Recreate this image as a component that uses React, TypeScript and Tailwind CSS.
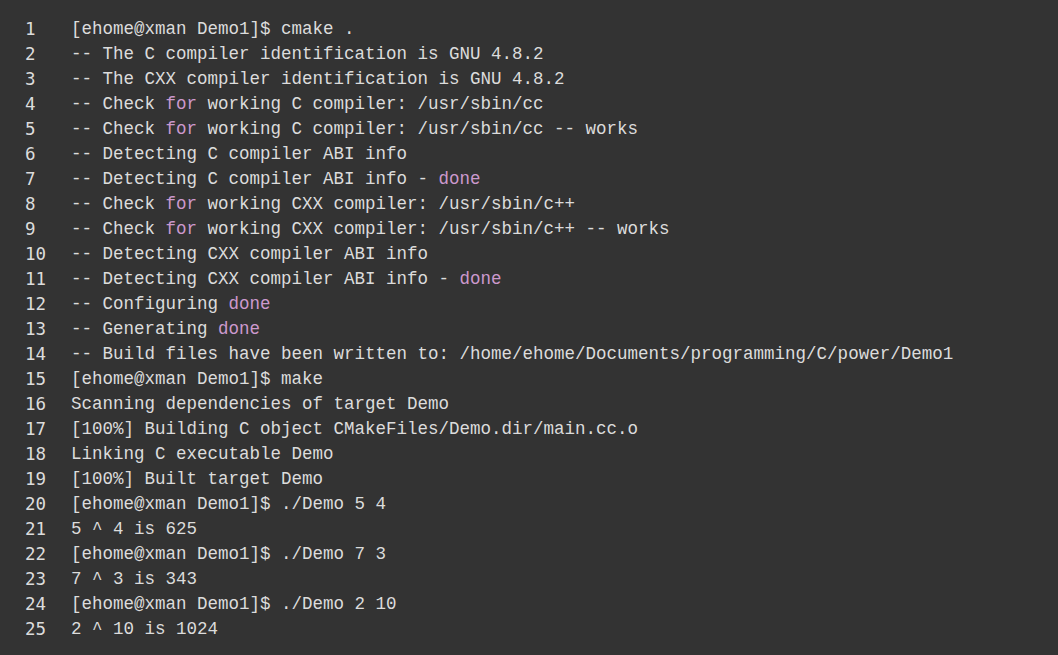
import React from 'react';

type Part = { t: string; k?: boolean };

const lines: Part[][] = [
  [{ t: '[ehome@xman Demo1]$ cmake .' }],
  [{ t: '-- The C compiler identification is GNU 4.8.2' }],
  [{ t: '-- The CXX compiler identification is GNU 4.8.2' }],
  [{ t: '-- Check ' }, { t: 'for', k: true }, { t: ' working C compiler: /usr/sbin/cc' }],
  [{ t: '-- Check ' }, { t: 'for', k: true }, { t: ' working C compiler: /usr/sbin/cc -- works' }],
  [{ t: '-- Detecting C compiler ABI info' }],
  [{ t: '-- Detecting C compiler ABI info - ' }, { t: 'done', k: true }],
  [{ t: '-- Check ' }, { t: 'for', k: true }, { t: ' working CXX compiler: /usr/sbin/c++' }],
  [{ t: '-- Check ' }, { t: 'for', k: true }, { t: ' working CXX compiler: /usr/sbin/c++ -- works' }],
  [{ t: '-- Detecting CXX compiler ABI info' }],
  [{ t: '-- Detecting CXX compiler ABI info - ' }, { t: 'done', k: true }],
  [{ t: '-- Configuring ' }, { t: 'done', k: true }],
  [{ t: '-- Generating ' }, { t: 'done', k: true }],
  [{ t: '-- Build files have been written to: /home/ehome/Documents/programming/C/power/Demo1' }],
  [{ t: '[ehome@xman Demo1]$ make' }],
  [{ t: 'Scanning dependencies of target Demo' }],
  [{ t: '[100%] Building C object CMakeFiles/Demo.dir/main.cc.o' }],
  [{ t: 'Linking C executable Demo' }],
  [{ t: '[100%] Built target Demo' }],
  [{ t: '[ehome@xman Demo1]$ ./Demo 5 4' }],
  [{ t: '5 ^ 4 is 625' }],
  [{ t: '[ehome@xman Demo1]$ ./Demo 7 3' }],
  [{ t: '7 ^ 3 is 343' }],
  [{ t: '[ehome@xman Demo1]$ ./Demo 2 10' }],
  [{ t: '2 ^ 10 is 1024' }],
];

export default function App() {
  return (
    <div className="w-[1058px] h-[655px] bg-[#333333] overflow-hidden">
      <pre className="pt-[17px] pl-[25px] font-['DejaVu_Sans_Mono',monospace] text-[17.5px] leading-[25px] text-[#dcdcdc]">
        {lines.map((parts, i) => (
          <div key={i} className="flex">
            <span className="w-[46px] shrink-0">{i + 1}</span>
            <code>
              {parts.map((p, j) => (
                <span key={j} className={p.k ? 'text-[#cc99cd]' : undefined}>
                  {p.t}
                </span>
              ))}
            </code>
          </div>
        ))}
      </pre>
    </div>
  );
}
